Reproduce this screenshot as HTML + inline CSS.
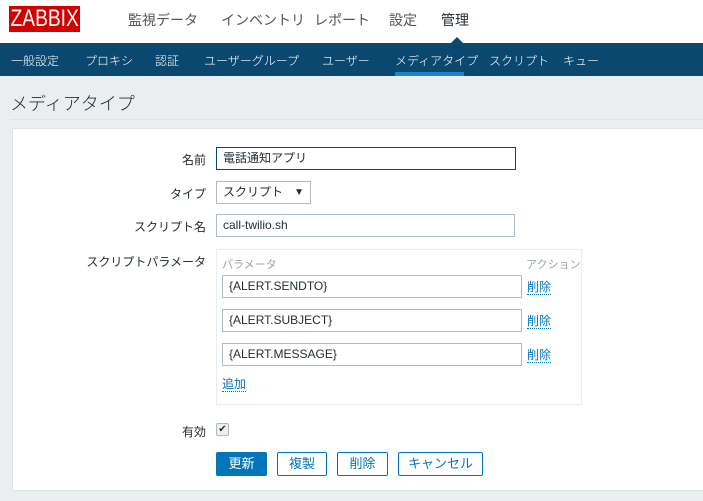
<!DOCTYPE html><html><head><meta charset="utf-8"><style>
*{box-sizing:border-box;margin:0;padding:0}
body{width:703px;height:501px;overflow:hidden;background:#ebeef0;font-family:"Liberation Sans","Noto Sans CJK JP",sans-serif;font-size:12px;color:#1f2c33;position:relative}
.a{position:absolute}
.hdr{left:0;top:0;width:703px;height:43px;background:#fff}
.logo{left:9px;top:6px;width:71px;height:26px;background:#d40000;color:#fff;display:flex;justify-content:center;align-items:center;overflow:hidden;white-space:nowrap}
.logo span{font-size:24px;line-height:26px;display:inline-block;transform:scaleX(0.8)}
.top{top:10px;font-size:14px;color:#555}
.nav{left:0;top:43px;width:703px;height:33px;background:#0b4870}
.nv{top:52px;color:#fff;font-size:12px;font-weight:300}
.inp{border:1px solid #acbbc4;background:#fff;height:23px;padding:3px 6px;font-size:12px;line-height:15px;color:#1f2c33}
.lbl{text-align:right;width:120px;left:86px}
.lnk{color:#0275b8;border-bottom:1px dotted #0275b8;line-height:14px}
.btn{top:452px;height:24px;border:1px solid #0275b8;border-radius:2px;color:#0275b8;text-align:center;line-height:21px;font-size:13px;background:#fff}
</style></head><body>
<div class="a hdr"></div>
<div class="a logo"><span>ZABBIX</span></div>
<div class="a top" style="left:128px">監視データ</div>
<div class="a top" style="left:221px">インベントリ</div>
<div class="a top" style="left:314px">レポート</div>
<div class="a top" style="left:389px">設定</div>
<div class="a top" style="left:441px;color:#1f2c33">管理</div>
<div class="a nav"></div>
<div class="a" style="left:451px;top:37px;width:0;height:0;border-left:6px solid transparent;border-right:6px solid transparent;border-bottom:6px solid #0b4870"></div>
<div class="a nv" style="left:11px">一般設定</div>
<div class="a nv" style="left:85px">プロキシ</div>
<div class="a nv" style="left:155px">認証</div>
<div class="a nv" style="left:204px">ユーザーグループ</div>
<div class="a nv" style="left:322px">ユーザー</div>
<div class="a nv" style="left:395px">メディアタイプ</div>
<div class="a nv" style="left:489px">スクリプト</div>
<div class="a nv" style="left:563px">キュー</div>
<div class="a" style="left:395px;top:72px;width:69px;height:4px;background:#1f84c6"></div>
<div class="a" style="left:10px;top:90px;font-size:18px;font-weight:300;color:#1f2c33">メディアタイプ</div>
<div class="a" style="left:10px;top:119px;width:693px;height:1px;background:#dfe4e7"></div>
<div class="a" style="left:12px;top:128px;width:691px;height:363px;background:#fff;border:1px solid #dfe4e7;border-right:none"></div>
<div class="a lbl" style="top:151px">名前</div>
<div class="a inp" style="left:216px;top:147px;width:300px;border-color:#0b4870">電話通知アプリ</div>
<div class="a lbl" style="top:185px">タイプ</div>
<div class="a inp" style="left:216px;top:181px;width:95px">スクリプト<span style="position:absolute;right:6px;font-size:10px">▼</span></div>
<div class="a lbl" style="top:218px">スクリプト名</div>
<div class="a inp" style="left:216px;top:214px;width:299px">call-twilio.sh</div>
<div class="a lbl" style="top:253px;width:130px;left:76px">スクリプトパラメータ</div>
<div class="a" style="left:216px;top:249px;width:366px;height:156px;border:1px solid #ebeef0"></div>
<div class="a" style="left:222px;top:256px;color:#9aa5ad;font-size:11px">パラメータ</div>
<div class="a" style="left:526px;top:256px;color:#9aa5ad;font-size:11px">アクション</div>
<div class="a inp" style="left:222px;top:275px;width:300px">{ALERT.SENDTO}</div>
<div class="a inp" style="left:222px;top:309px;width:300px">{ALERT.SUBJECT}</div>
<div class="a inp" style="left:222px;top:343px;width:300px">{ALERT.MESSAGE}</div>
<div class="a lnk" style="left:527px;top:280px">削除</div>
<div class="a lnk" style="left:527px;top:314px">削除</div>
<div class="a lnk" style="left:527px;top:348px">削除</div>
<div class="a lnk" style="left:222px;top:377px">追加</div>
<div class="a lbl" style="top:423px">有効</div>
<div class="a" style="left:216px;top:423px;width:13px;height:13px;border:1px solid #acbbc4;background:#eee;border-radius:2px;font-size:10px;line-height:11px;text-align:center">✔</div>
<div class="a btn" style="left:216px;width:51px;background:#0275b8;color:#fff">更新</div>
<div class="a btn" style="left:277px;width:50px">複製</div>
<div class="a btn" style="left:337px;width:51px">削除</div>
<div class="a btn" style="left:398px;width:85px">キャンセル</div>
</body></html>
